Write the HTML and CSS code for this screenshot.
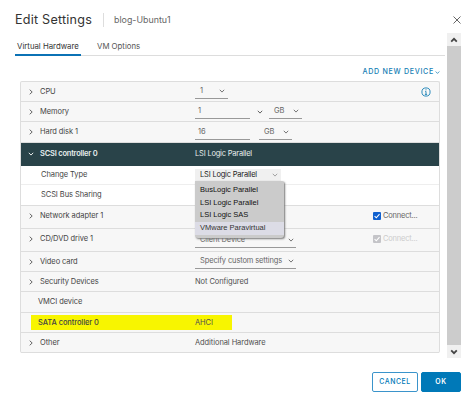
FILE: index.html
```html
<!DOCTYPE html>
<html lang="en">
<head>
<meta charset="utf-8">
<title>Edit Settings</title>
<link rel="stylesheet" href="styles.css">
</head>
<body>
<svg class="defs" aria-hidden="true">
  <symbol id="chev" viewBox="0 0 6 6"><path d="M.8 1.8 3 4.1 5.2 1.8"/></symbol>
  <symbol id="right" viewBox="0 0 6 6"><path d="M1.7.7 4.2 3 1.7 5.3"/></symbol>
</svg>
<div class="modal">
  <header class="head">
    <h1>Edit Settings</h1>
    <span class="vm">blog-Ubuntu1</span>
    <svg class="close" viewBox="0 0 8 8"><path d="M.5.5l7 7M7.5.5l-7 7"/></svg>
  </header>
  <div class="middle">
    <main class="content">
      <nav class="tabs"><a class="tab active">Virtual Hardware</a><a class="tab">VM Options</a></nav>
      <div class="add">ADD NEW DEVICE<svg class="ico"><use href="#chev"/></svg></div>
      <section class="table">
        <div class="row h20"><div class="label"><svg class="ico"><use href="#right"/></svg>CPU</div>
          <div class="value"><span class="sel cpu">1<svg class="ico"><use href="#chev"/></svg></span></div>
          <svg class="info" viewBox="0 0 10 10"><circle cx="5" cy="5" r="4.1"/><path d="M5 2.3v1M4.2 4.4H5v3M3.9 7.4h2.2"/></svg></div>
        <div class="row h20"><div class="label"><svg class="ico"><use href="#right"/></svg>Memory</div>
          <div class="value"><span class="sel num">1</span><svg class="ico memchev"><use href="#chev"/></svg><span class="sel unit">GB<svg class="ico"><use href="#chev"/></svg></span></div></div>
        <div class="row h21"><div class="label"><svg class="ico"><use href="#right"/></svg>Hard disk 1</div>
          <div class="value"><span class="sel num">16</span><span class="sel unit disk">GB<svg class="ico"><use href="#chev"/></svg></span></div></div>
        <div class="row dark"><div class="label"><svg class="ico"><use href="#chev"/></svg>SCSI controller 0</div><div class="value">LSI Logic Parallel</div></div>
        <div class="row sub first"><div class="label">Change Type</div>
          <div class="value"><span class="picker">LSI Logic Parallel<svg class="ico"><use href="#chev"/></svg></span>
            <ul class="menu"><li>BusLogic Parallel</li><li>LSI Logic Parallel</li><li>LSI Logic SAS</li><li class="hover">VMware Paravirtual</li></ul></div></div>
        <div class="row sub h21"><div class="label">SCSI Bus Sharing</div></div>
        <div class="row h23"><div class="label"><svg class="ico"><use href="#right"/></svg>Network adapter 1</div>
          <div class="value"></div><div class="check"><svg viewBox="0 0 8 8"><path d="M1.6 4.1 3.3 5.8 6.5 2.2"/></svg>Connect...</div></div>
        <div class="row h23"><div class="label"><svg class="ico"><use href="#right"/></svg>CD/DVD drive 1</div>
          <div class="value"><span class="sel wide client">Client Device<svg class="ico"><use href="#chev"/></svg></span></div><div class="check off"><svg viewBox="0 0 8 8"><path d="M1.6 4.1 3.3 5.8 6.5 2.2"/></svg>Connect...</div></div>
        <div class="row h20"><div class="label"><svg class="ico"><use href="#right"/></svg>Video card</div>
          <div class="value"><span class="sel wide">Specify custom settings<svg class="ico"><use href="#chev"/></svg></span></div></div>
        <div class="row h20"><div class="label"><svg class="ico"><use href="#right"/></svg>Security Devices</div><div class="value">Not Configured</div></div>
        <div class="row h21"><div class="label plain">VMCI device</div></div>
        <div class="row h20 sata"><div class="label plain">SATA controller 0</div><div class="value">AHCI</div></div>
        <div class="row h20"><div class="label"><svg class="ico"><use href="#right"/></svg>Other</div><div class="value">Additional Hardware</div></div>
      </section>
    </main>
    <div class="scroll"><span><svg viewBox="0 0 8 6"><path d="M1.2 4.6 4 1.8 6.8 4.6"/></svg></span><span><svg viewBox="0 0 8 6"><path d="M1.2 1.4 4 4.2 6.8 1.4"/></svg></span></div>
  </div>
  <footer class="foot"><button class="btn">CANCEL</button><button class="btn ok">OK</button></footer>
</div>
</body>
</html>
```
FILE: styles.css
```css
* { box-sizing: border-box; }
body { margin: 0; background: #fff; color: #505050; font: 7.5px/10px Inter, "Open Sans", sans-serif; letter-spacing: -.08px; overflow: hidden; }
svg { fill: none; stroke: currentColor; flex: none; display: block; }
.defs { position: absolute; width: 0; height: 0; }
.ico { width: 6px; height: 6px; stroke-width: .9; }
.modal { width: 474px; height: 405px; display: flex; flex-direction: column; }

.head { height: 33px; padding: 7px 13px 0 15px; display: flex; align-items: center; }
.head h1 { margin: 0; width: 89px; font-size: 12.6px; letter-spacing: .22px; line-height: 14px; font-weight: 400; color: #333; white-space: nowrap; border-right: 1px solid #ddd; }
.vm { margin-left: 10px; font-size: 8.9px; letter-spacing: 0; color: #666; }
.close { width: 8px; height: 8px; margin-left: auto; stroke: #555; stroke-width: .9; }

.middle { height: 325px; display: flex; }
.content { width: 432px; margin-left: 15px; }
.tabs { display: flex; height: 23px; width: 430px; border-bottom: 1px solid #ddd; }
.tab { height: 23px; line-height: 27px; font-size: 7.8px; letter-spacing: 0; color: #555; padding: 0 2px; margin-right: 14px; white-space: nowrap; }
.tab.active { width: 66px; border-bottom: 2px solid #0b72b5; color: #333; }
.add { height: 25px; width: 425px; padding-top: 7px; display: flex; justify-content: flex-end; align-items: center; gap: 1px; font-size: 7.1px; font-weight: 500; letter-spacing: .7px; color: #1680b5; }
.add .ico { width: 5px; height: 5px; }

.table { width: 420px; margin-left: 5px; border: 1px solid #ddd; border-bottom: 0; border-radius: 2px; background: #f7f7f7; }
.row { display: flex; align-items: center; border-bottom: 1px solid #ddd; position: relative; }
.h20 { height: 20px; }
.h21 { height: 21px; }
.h23 { height: 23px; padding-bottom: 2px; }
.label { width: 174px; padding-left: 7px; display: flex; align-items: center; gap: 6px; white-space: nowrap; color: #444; }
.label .ico { stroke: #555; }
.label.plain { padding-left: 17px; }
.value { flex: 1; display: flex; align-items: center; white-space: nowrap; }
.sel { height: 14px; margin-top: 1px; border-bottom: 1px solid #999; display: flex; align-items: center; justify-content: space-between; color: #666; padding: 0 3px 1px 5px; }
.cpu { width: 33px; }
.num { width: 55px; padding-left: 3px; }
.memchev { margin: 0 6px 0 7px; }
.unit { width: 33px; }
.disk { margin-left: 9px; }
.wide { width: 101px; padding-right: 2px; letter-spacing: -.13px; }
.client { margin-top: 4px; height: 13px; }
.info { width: 10px; height: 10px; margin-right: 8px; stroke: #1680b5; stroke-width: .9; }
.dark { height: 23px; background: #294349; border-color: #294349; }
.dark .label, .dark .value { color: #e8eeee; }
.dark .label { font-weight: 600; letter-spacing: -.2px; }
.dark .value { letter-spacing: -.2px; }
.dark .ico { stroke: #fff; }
.sub { background: #fff; }
.sub .label { padding-left: 20px; }
.first { height: 19px; border-color: #eee; }
.picker { width: 86px; height: 13px; background: #f0f0f0; display: flex; align-items: center; justify-content: space-between; padding: 0 3px 0 5px; color: #222; letter-spacing: -.2px; }
.picker .ico { stroke: #999; }
.menu { position: absolute; z-index: 2; left: 174px; top: 15px; width: 89px; height: 57px; margin: 0; padding: 3px 0 2px; list-style: none; background: #cbcbcb; border-radius: 0 2px 3px 3px; box-shadow: 1px 1px 2px #777; color: #111; font-family: "Liberation Sans", Arial, sans-serif; font-size: 7.5px; letter-spacing: 0; }
.menu li { height: 12.7px; line-height: 12.7px; padding-left: 5px; }
.menu .hover { background: #dcdce6; color: #333; }
.check { width: 66px; display: flex; align-items: center; gap: 2px; color: #666; letter-spacing: -.2px; }
.check svg { width: 8px; height: 8px; border-radius: 1px; background: #1161cf; stroke: #fff; stroke-width: 1.1; }
.check.off { color: #ccc; }
.check.off svg { background: #c4c4c8; }
.sata::before { content: ""; position: absolute; left: 10px; top: 2px; width: 201px; height: 15px; background: #f8f500; }
.sata > div { position: relative; }
.sata .label { font-weight: 500; }

.scroll { width: 14px; background: #ccc; display: flex; flex-direction: column; justify-content: space-between; }
.scroll span { height: 13px; display: grid; place-items: center; background: #f0f0f0; }
.scroll svg { width: 8px; height: 6px; stroke: #444; stroke-width: 1.8; }

.foot { display: flex; justify-content: flex-end; gap: 3px; padding: 14px 13px 0 0; }
.btn { width: 46px; height: 20px; padding: 0; border: 1px solid #3b94cb; border-radius: 2px; background: #fff; color: #0079b8; font: 500 6.9px/18px Inter, sans-serif; letter-spacing: .6px; }
.btn.ok { width: 40px; background: #0079b8; border-color: #0079b8; color: #fff; font-weight: 600; }
```
